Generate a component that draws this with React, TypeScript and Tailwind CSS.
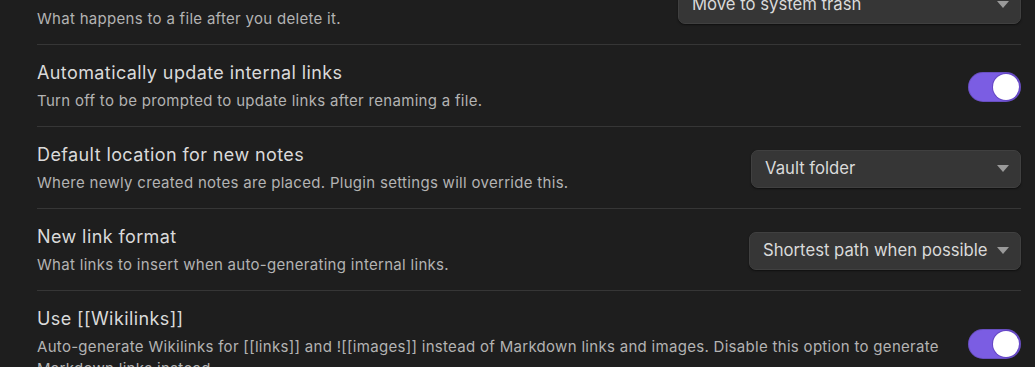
const font = { fontFamily: "Inter, 'Noto Sans', sans-serif" };

function Toggle() {
  return (
    <div className="flex h-[30px] w-[53px] shrink-0 items-center justify-end rounded-full bg-[#7b5de3] pr-[2px] shadow-[inset_0_0_0_1px_rgba(0,0,0,0.15)]">
      <div className="h-[26px] w-[26px] rounded-full bg-white shadow-[0_0_0_1px_rgba(60,30,140,0.35)]" />
    </div>
  );
}

function Dropdown({ value, width }: { value: string; width: string }) {
  return (
    <div
      className={`flex h-[38px] shrink-0 items-center justify-between rounded-[7px] border border-[#404040] bg-[#363636] pl-[13px] pr-[11px] text-[16.7px] text-[#dadada] shadow-[0_1px_2px_rgba(0,0,0,0.5)] ${width}`}
    >
      <span className="whitespace-nowrap">{value}</span>
      <svg width="12" height="7" viewBox="0 0 12 7" className="ml-2 shrink-0">
        <path d="M0 0 L12 0 L6 7 Z" fill="#9a9a9a" />
      </svg>
    </div>
  );
}

function Row({
  title,
  desc,
  control,
  last,
  className = "",
}: {
  title: string;
  desc: string;
  control: React.ReactNode;
  last?: boolean;
  className?: string;
}) {
  return (
    <div
      className={`flex items-center gap-6 pt-4 pb-[14px] ${last ? "" : "border-b border-[#363636]"} ${className}`}
    >
      <div className="min-w-0 flex-1">
        <div className="text-[18px] leading-6 tracking-[0.4px] text-[#dadada]">{title}</div>
        <div className="mt-[5px] text-[15px] leading-[22px] tracking-[0.3px] text-[#b3b3b3]">{desc}</div>
      </div>
      {control}
    </div>
  );
}

export default function App() {
  return (
    <div className="h-[367px] w-[1035px] overflow-hidden bg-[#1e1e1e]" style={font}>
      <div className="pl-[37px] pr-[14px]">
        <Row
          className="-mt-[37px]"
          title="Deleted files"
          desc="What happens to a file after you delete it."
          control={<Dropdown value="Move to system trash" width="w-[343px]" />}
        />
        <Row
          title="Automatically update internal links"
          desc="Turn off to be prompted to update links after renaming a file."
          control={<Toggle />}
        />
        <Row
          title="Default location for new notes"
          desc="Where newly created notes are placed. Plugin settings will override this."
          control={<Dropdown value="Vault folder" width="w-[270px]" />}
        />
        <Row
          title="New link format"
          desc="What links to insert when auto-generating internal links."
          control={<Dropdown value="Shortest path when possible" width="w-[272px]" />}
        />
        <Row
          last
          title="Use [[Wikilinks]]"
          desc="Auto-generate Wikilinks for [[links]] and ![[images]] instead of Markdown links and images. Disable this option to generate Markdown links instead."
          control={<Toggle />}
        />
      </div>
    </div>
  );
}
